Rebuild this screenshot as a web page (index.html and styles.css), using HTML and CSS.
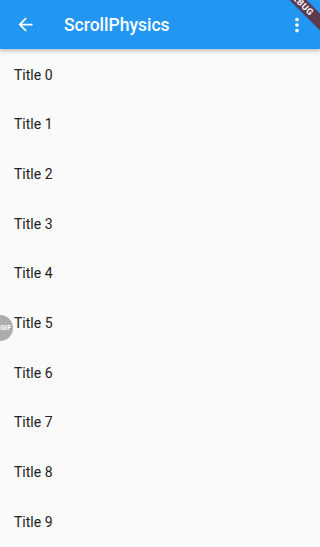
FILE: index.html
```html
<!DOCTYPE html>
<html lang="en">
<head>
  <meta charset="UTF-8">
  <title>ScrollPhysics</title>
  <link rel="stylesheet" href="styles.css">
</head>
<body>
  <div class="app-bar">
    <svg class="back" width="21" height="21" viewBox="0 0 24 24"><path d="M20 11H7.83l5.59-5.59L12 4l-8 8 8 8 1.41-1.41L7.83 13H20v-2z" fill="#fff"/></svg>
    <div class="title">ScrollPhysics</div>
    <svg class="more" width="22" height="22" viewBox="0 0 24 24"><path d="M12 8c1.1 0 2-.9 2-2s-.9-2-2-2-2 .9-2 2 .9 2 2 2zm0 2c-1.1 0-2 .9-2 2s.9 2 2 2 2-.9 2-2-.9-2-2-2zm0 6c-1.1 0-2 .9-2 2s.9 2 2 2 2-.9 2-2-.9-2-2-2z" fill="#fff"/></svg>
  </div>

  <div class="list">
    <div class="item">Title 0</div>
    <div class="item">Title 1</div>
    <div class="item">Title 2</div>
    <div class="item">Title 3</div>
    <div class="item">Title 4</div>
    <div class="item">Title 5</div>
    <div class="item">Title 6</div>
    <div class="item">Title 7</div>
    <div class="item">Title 8</div>
    <div class="item">Title 9</div>
  </div>

  <div class="gif">GIF</div>
  <div class="banner">DEBUG</div>
</body>
</html>
```
FILE: styles.css
```css
body {
  margin: 0;
  font-family: Roboto, sans-serif;
  background-color: #fafafa;
  width: 320px;
  height: 547px;
  overflow: hidden;
  position: relative;
}

.app-bar {
  height: 49px;
  background-color: #2196f3;
  display: flex;
  align-items: center;
  color: #fff;
  box-shadow: 0 2px 4px rgba(0, 0, 0, 0.25);
  position: relative;
  z-index: 1;
}

.back {
  margin-left: 14.5px;
}

.title {
  margin-left: 28.5px;
  font-size: 17.5px;
  font-weight: 500;
  flex: 1;
}

.more {
  margin-right: 12px;
}

.list {
  padding-top: 1px;
}

.item {
  height: 49.67px;
  display: flex;
  align-items: center;
  padding-left: 14px;
  font-size: 14px;
  color: #212121;
}

.gif {
  position: absolute;
  left: -13px;
  top: 315px;
  width: 26px;
  height: 26px;
  border-radius: 50%;
  background-color: #adadaf;
  color: #fff;
  font-size: 7px;
  font-weight: bold;
  display: flex;
  align-items: center;
  justify-content: flex-end;
  padding-right: 2px;
  box-sizing: border-box;
}

.banner {
  position: absolute;
  top: -3px;
  left: 251px;
  width: 100px;
  height: 12px;
  line-height: 12px;
  background-color: #5b3a4f;
  color: #fff;
  font-size: 9px;
  font-weight: bold;
  text-align: center;
  transform: rotate(45deg);
  z-index: 2;
  letter-spacing: 0.5px;
}
```
